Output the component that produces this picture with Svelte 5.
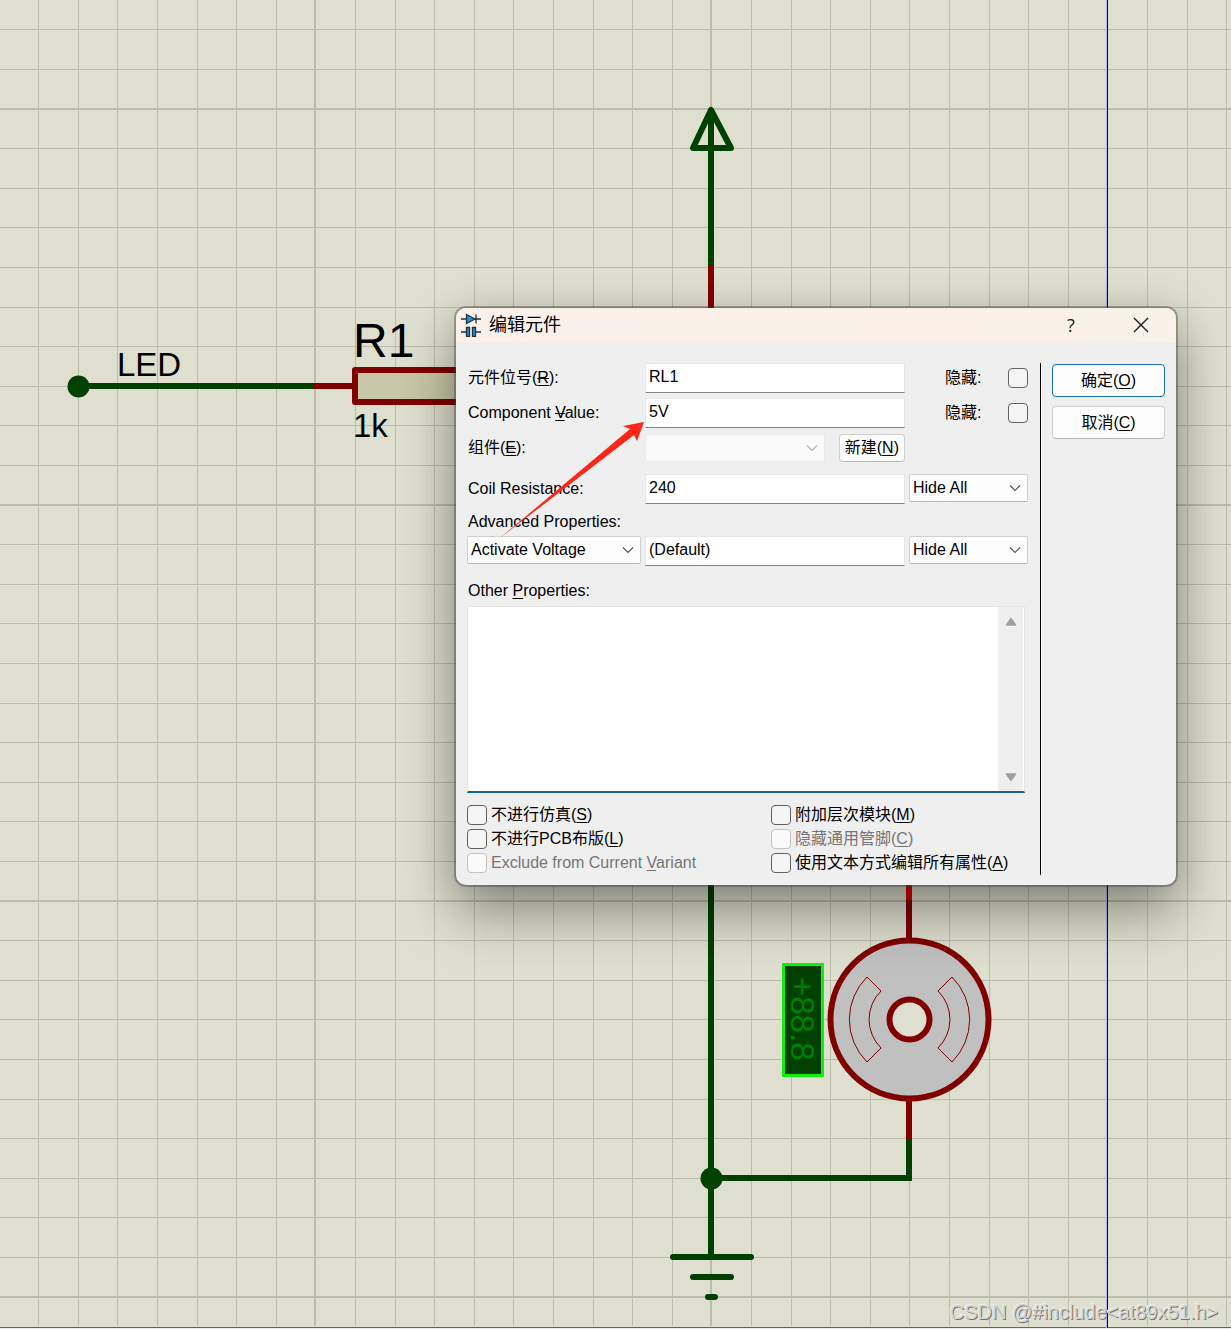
<script lang="ts">
	let innerWidth = $state(1231);
	let innerHeight = $state(1329);

	const STEP = 39.6;

	let reference = $state('RL1');
	let value = $state('5V');
	let resistance = $state('240');
	let advanced = $state('(Default)');
	let other = $state('');

	const visibility = ['Hide All', 'Show All', 'Hide Name', 'Hide Value'];

	const options = [
		{ id: 'sim', text: '不进行仿真', key: 'S', disabled: false },
		{ id: 'module', text: '附加层次模块', key: 'M', disabled: false },
		{ id: 'pcb', text: '不进行PCB布版', key: 'L', disabled: false },
		{ id: 'pins', text: '隐藏通用管脚', key: 'C', disabled: true },
		{ id: 'variant', text: 'Exclude from Current Variant', key: '', disabled: true },
		{ id: 'astext', text: '使用文本方式编辑所有属性', key: 'A', disabled: false }
	];

	// every tenth line of the sheet is a major one
	function gridLines(major: number, size: number) {
		const lines: { at: number; width: number }[] = [];
		for (let k = -Math.floor(major / STEP); major + k * STEP < size; k++) {
			const at = Math.round(major + k * STEP);
			lines.push(k % 10 === 0 ? { at: at - 1, width: 2 } : { at, width: 1 });
		}
		return lines;
	}

	let columns = $derived(gridLines(315.4, innerWidth));
	let rows = $derived(gridLines(108.6, innerHeight - 3));
</script>

<svelte:window bind:innerWidth bind:innerHeight />

{#snippet chevron()}
	<svg class="chevron" viewBox="0 0 12 8" width="12" height="8" aria-hidden="true">
		<path d="M1 1.5 6 6.5 11 1.5" fill="none" stroke="currentColor" stroke-width="1.1" />
	</svg>
{/snippet}

<main class="sheet">
	<svg class="schematic" width="100%" height="100%" aria-label="Schematic">
		<g fill="#bbbcac" shape-rendering="crispEdges">
			{#each columns as line}
				<rect x={line.at} y="0" width={line.width} height={innerHeight - 3} />
			{/each}
			{#each rows as line}
				<rect x="0" y={line.at} width="100%" height={line.width} />
			{/each}
		</g>
		<rect x="1106" width="1" height="100%" fill="#b4b4ee" />
		<rect x="1107" width="1" height="100%" fill="#000080" />

		<!-- input terminal and R1 -->
		<path class="wire" d="M78 386H314" />
		<circle cx="78.5" cy="386.5" r="11" fill="#004000" />
		<path class="pin" d="M314 386H355" />
		<rect class="pin" x="355" y="370" width="140" height="32" style:fill="#c8c8a8" />
		<text x="117" y="376" font-size="33">LED</text>
		<text x="353" y="357" font-size="48">R1</text>
		<text x="353" y="437" font-size="33">1k</text>

		<!-- supply -->
		<path class="wire" d="M711 110V266M711 110 693 148H731Z" />
		<path class="pin" d="M711 266V320" />

		<!-- ground -->
		<path class="wire corner" d="M711 870V1257M711 1178H909V1140" />
		<circle cx="711.5" cy="1178.5" r="11" fill="#004000" />
		<path class="wire round" d="M673 1257H751M693 1277H731M708 1297H715" />

		<!-- motor -->
		<path d="M909 870V900" stroke="#e00000" stroke-width="6" />
		<path class="pin" d="M909 900V940M909 1098V1140" />
		<circle class="pin" cx="909.5" cy="1019.5" r="79" style:fill="#c0c0c0" />
		<circle class="pin" cx="909.5" cy="1019.5" r="20" style:fill="#dfdfcf" />
		<path
			d="M867 977A60 60 0 0 0 867 1062L881 1048A40 40 0 0 1 881 991ZM952 977A60 60 0 0 1 952 1062L938 1048A40 40 0 0 0 938 991Z"
			fill="none"
			stroke="#800000"
		/>
		<rect x="783.5" y="964.5" width="39" height="111" fill="#004000" stroke="#10f010" stroke-width="3" />
		<text class="readout" transform="translate(791 977) rotate(90)" font-size="33">+88.8</text>
	</svg>

	<section class="dialog" role="dialog" aria-labelledby="dialog-title">
		<header class="titlebar">
			<svg width="20" height="24" viewBox="0 0 20 24" aria-hidden="true">
				<g stroke="#26323a" stroke-width="1.3">
					<path d="M0 6H20M0 19H5M15 19H20M15 1.5V10.5" />
					<path d="M5.5 1.5V10.5L14 6Z" fill="#2293d8" />
					<path d="M5.5 14.5H8.5V23.5H5.5ZM11.5 14.5H14.5V23.5H11.5Z" fill="#2293d8" />
				</g>
			</svg>
			<h1 id="dialog-title">编辑元件</h1>
			<button type="button" class="caption" aria-label="Help">?</button>
			<button type="button" class="caption" aria-label="Close">
				<svg width="16" height="16" viewBox="0 0 16 16">
					<path d="M1 1 15 15M15 1 1 15" stroke="#1a1a1a" stroke-width="1.4" />
				</svg>
			</button>
		</header>

		<div class="body">
			<form class="form">
				<div class="row">
					<label for="reference">元件位号(<u class="struck">R</u>):</label>
					<input id="reference" type="text" bind:value={reference} />
					<label class="hide">隐藏: <input type="checkbox" /></label>
				</div>
				<div class="row">
					<label for="value">Component <u class="struck">V</u>alue:</label>
					<input id="value" type="text" bind:value />
					<label class="hide">隐藏: <input type="checkbox" /></label>
				</div>
				<div class="row element">
					<label for="element">组件(<u class="struck">E</u>):</label>
					<div class="pair">
						<span class="select disabled">
							<select id="element" disabled></select>
							{@render chevron()}
						</span>
						<button type="button">新建(<u>N</u>)</button>
					</div>
				</div>
				<div class="row">
					<label for="resistance">Coil Resistance:</label>
					<input id="resistance" type="text" bind:value={resistance} />
					<span class="select">
						<select aria-label="Coil Resistance visibility">
							{#each visibility as item}
								<option>{item}</option>
							{/each}
						</select>
						{@render chevron()}
					</span>
				</div>
				<label class="heading advanced" for="property">Advanced Properties:</label>
				<div class="row">
					<span class="select">
						<select id="property">
							<option>Activate Voltage</option>
						</select>
						{@render chevron()}
					</span>
					<input type="text" aria-label="Property value" bind:value={advanced} />
					<span class="select">
						<select aria-label="Property visibility">
							{#each visibility as item}
								<option>{item}</option>
							{/each}
						</select>
						{@render chevron()}
					</span>
				</div>
				<label class="heading other" for="other">Other <u>P</u>roperties:</label>
				<div class="memo">
					<textarea id="other" bind:value={other}></textarea>
					<div class="scrollbar" aria-hidden="true">
						<svg width="12" height="9" viewBox="0 0 12 9">
							<path d="M1.5 8H10.5L6 1.5Z" fill="#a0a0a0" stroke="#a0a0a0" stroke-width="1.5" stroke-linejoin="round" />
						</svg>
						<svg width="12" height="9" viewBox="0 0 12 9">
							<path d="M1.5 1H10.5L6 7.5Z" fill="#a0a0a0" stroke="#a0a0a0" stroke-width="1.5" stroke-linejoin="round" />
						</svg>
					</div>
				</div>
				<div class="options">
					{#each options as option (option.id)}
						<label class:disabled={option.disabled}>
							<input type="checkbox" disabled={option.disabled} />
							{#if option.key}
								<span>{option.text}(<u>{option.key}</u>)</span>
							{:else}
								<span>Exclude from Current <u>V</u>ariant</span>
							{/if}
						</label>
					{/each}
				</div>
			</form>

			<div class="actions">
				<button type="button" class="primary">确定(<u>O</u>)</button>
				<button type="button">取消(<u>C</u>)</button>
			</div>
		</div>
	</section>

	<svg class="pointer" width="146" height="120" viewBox="0 0 146 120" aria-hidden="true">
		<path d="M0 118 130 9 123 6 144 2 137 21 134 15Z" fill="#ff2617" />
	</svg>

	<div class="watermark">CSDN @#include&lt;at89x51.h&gt;</div>
</main>

<style>
	:global(body) {
		margin: 0;
	}

	.sheet {
		position: relative;
		min-height: 100vh;
		overflow: hidden;
		box-sizing: border-box;
		background: #dfdfcf;
		border-bottom: 1px solid #e8ecf0;
		box-shadow: inset 0 -1px #60686c;
		font-family: 'Liberation Sans', 'Noto Sans CJK SC', sans-serif;
		font-size: 16px;
		line-height: 20px;
		color: #000;
	}

	.schematic {
		position: absolute;
		inset: 0;
	}

	.wire,
	.pin {
		fill: none;
		stroke: #004000;
		stroke-width: 6px;
		stroke-linejoin: round;
	}

	.wire.round {
		stroke-linecap: round;
	}

	.wire.corner {
		stroke-linejoin: miter;
	}

	.pin {
		stroke: #800000;
	}

	.readout {
		fill: #008000;
	}

	.dialog {
		position: absolute;
		top: 308px;
		left: 456px;
		width: 720px;
		border-radius: 10px;
		background: #efefef;
		box-shadow:
			0 0 0 2px rgba(60, 60, 50, 0.4),
			0 28px 56px rgba(0, 0, 0, 0.36),
			0 4px 40px rgba(0, 0, 0, 0.12);
	}

	.titlebar {
		display: flex;
		align-items: center;
		box-sizing: border-box;
		height: 35px;
		padding: 0 0 2px 5px;
		border-radius: 10px 10px 0 0;
		background: linear-gradient(90deg, #f9f1ea, #faf0e7 70%, #f8f2e8);
	}

	.titlebar h1 {
		flex: 1;
		margin: 0 0 0 8px;
		font-size: 18px;
		font-weight: 400;
	}

	.caption {
		display: flex;
		align-items: center;
		justify-content: center;
		width: 70px;
		height: 32px;
		padding: 0;
		border: 0;
		border-radius: 0;
		background: none;
		font-family: 'Open Sans', sans-serif;
		font-size: 18px;
		color: #1a1a1a;
	}

	.body {
		display: flex;
		gap: 11px;
		padding: 20px 11px 10px;
	}

	.form {
		flex: 1;
		padding-right: 12px;
		border-right: 1px solid #000;
		box-shadow: 1px 0 #fff;
	}

	.row {
		display: grid;
		grid-template-columns: 174px 1fr 119px;
		column-gap: 4px;
		align-items: center;
		min-height: 30px;
		margin-bottom: 5px;
	}

	.row > label:first-child,
	.heading {
		padding-left: 1px;
	}

	.row.element {
		margin-bottom: 11px;
	}

	.row .select {
		align-self: start;
	}

	.struck {
		text-decoration: underline line-through;
	}

	u {
		text-underline-offset: 2px;
		text-decoration-thickness: 1px;
	}

	input[type='text'] {
		box-sizing: border-box;
		width: 100%;
		height: 30px;
		padding: 0 4px 3px 3px;
		border: 1px solid #e6e6e6;
		border-bottom-color: #868686;
		background: #fff;
		font: inherit;
		color: inherit;
		outline: none;
	}

	.hide {
		display: flex;
		align-items: center;
		justify-content: space-between;
		padding-left: 36px;
	}

	input[type='checkbox'] {
		appearance: none;
		box-sizing: border-box;
		flex: none;
		width: 20px;
		height: 20px;
		margin: 0;
		border: 1px solid #626262;
		border-radius: 4px;
		background: #f5f5f5;
	}

	input[type='checkbox']:disabled {
		border-color: #c4c4c4;
		background: #fafafa;
	}

	.pair {
		display: flex;
		gap: 14px;
	}

	.pair .select {
		flex: 1;
	}

	.select {
		position: relative;
		display: flex;
	}

	select {
		appearance: none;
		box-sizing: border-box;
		width: 100%;
		height: 28px;
		padding: 0 24px 0 3px;
		border: 1px solid #d0d0d0;
		border-bottom-color: #b8b8b8;
		border-radius: 2px;
		background: #fdfdfd;
		font: inherit;
		color: inherit;
	}

	.select.disabled select {
		border-color: #eaeaea;
		background: #f9f9f9;
		opacity: 1;
	}

	.chevron {
		position: absolute;
		top: 10px;
		right: 7px;
		color: #555;
		pointer-events: none;
	}

	.disabled .chevron {
		color: #b4b4b4;
	}

	button {
		box-sizing: border-box;
		height: 28px;
		padding: 0 5px;
		border: 1px solid #d0d0d0;
		border-bottom-color: #b8b8b8;
		border-radius: 4px;
		background: #fdfdfd;
		font: inherit;
		color: inherit;
	}

	.heading {
		display: block;
	}

	.advanced {
		margin: 8px 0 4px;
	}

	.other {
		margin: 15px 0 5px;
	}

	.memo {
		display: flex;
		margin-right: 3px;
		border: 1px solid #e6e6e6;
		border-bottom: 2px solid #1a6399;
		background: #fff;
	}

	textarea {
		flex: 1;
		box-sizing: border-box;
		height: 184px;
		padding: 4px;
		border: 0;
		background: #fff;
		font: inherit;
		resize: none;
		outline: none;
	}

	.scrollbar {
		display: flex;
		flex-direction: column;
		align-items: center;
		justify-content: space-between;
		width: 25px;
		padding: 10px 0 9px;
		box-sizing: border-box;
		margin-right: 1px;
		background: #efefef;
	}

	.options {
		display: grid;
		grid-template-columns: 304px 1fr;
		margin-top: 10px;
	}

	.options label {
		display: flex;
		align-items: center;
		gap: 4px;
		height: 24px;
		white-space: nowrap;
	}

	.options label.disabled {
		color: #757575;
	}

	.actions {
		display: flex;
		flex-direction: column;
		gap: 9px;
		width: 113px;
		padding-top: 1px;
	}

	.actions button {
		height: 33px;
	}

	.actions .primary {
		border-color: #1a6fae;
	}

	.pointer {
		position: absolute;
		top: 420px;
		left: 500px;
		pointer-events: none;
	}

	.watermark {
		position: absolute;
		right: 13px;
		bottom: 6px;
		font-size: 20px;
		color: #d4d4cc;
		text-shadow:
			1px 1px #777,
			-1px -1px #eee;
	}
</style>
